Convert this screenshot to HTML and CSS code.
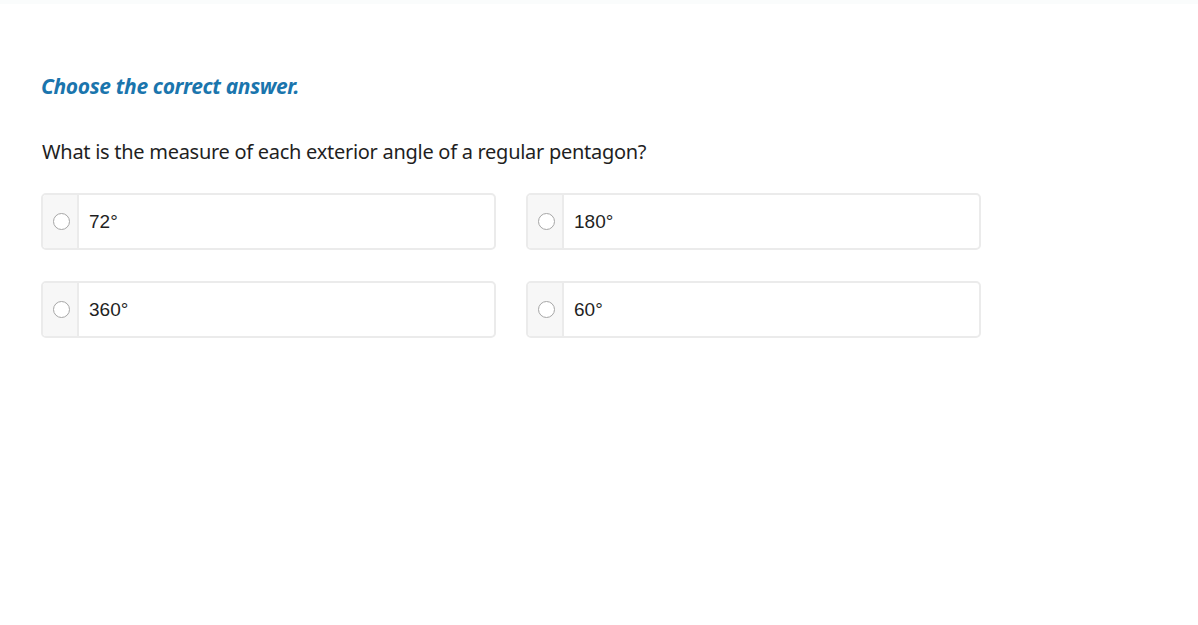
FILE: index.html
```html
<!DOCTYPE html>
<html>
<head>
<meta charset="utf-8">
<link rel="stylesheet" href="styles.css">
</head>
<body>
<div class="topbar"></div>
<main class="quiz">
  <h2 class="instruction">Choose the correct answer.</h2>
  <p class="question">What is the measure of each exterior angle of a regular pentagon?</p>
  <div class="options">
    <label class="option"><span class="radio-cell"><span class="radio"></span></span><span class="label">72°</span></label>
    <label class="option"><span class="radio-cell"><span class="radio"></span></span><span class="label">180°</span></label>
    <label class="option"><span class="radio-cell"><span class="radio"></span></span><span class="label">360°</span></label>
    <label class="option"><span class="radio-cell"><span class="radio"></span></span><span class="label">60°</span></label>
  </div>
</main>
</body>
</html>
```

FILE: styles.css
```css
html, body {
  margin: 0;
  padding: 0;
  background: #ffffff;
}
.topbar {
  height: 4px;
  background: #fafcfc;
}
.quiz {
  padding: 0 41px;
  font-family: "Noto Sans", "Open Sans", sans-serif;
}
.instruction {
  margin: 0;
  padding-top: 70px;
  font-size: 21px;
  line-height: 24px;
  font-weight: 700;
  font-style: italic;
  color: #1a75ad;
  letter-spacing: -0.35px;
}
.question {
  margin: 41px 0 0 1px;
  font-size: 20px;
  line-height: 26px;
  color: #1f1f1f;
  letter-spacing: -0.28px;
}
.options {
  display: grid;
  grid-template-columns: 455px 455px;
  column-gap: 30px;
  row-gap: 31px;
  margin-top: 28px;
}
.option {
  display: flex;
  height: 57px;
  box-sizing: border-box;
  border: 2px solid #ebebeb;
  border-radius: 5px;
  overflow: hidden;
  cursor: pointer;
}
.radio-cell {
  width: 34px;
  flex: none;
  background: #f7f7f7;
  border-right: 2px solid #ebebeb;
  display: flex;
  align-items: center;
  justify-content: center;
}
.radio {
  width: 17px;
  height: 17px;
  box-sizing: border-box;
  border: 1px solid #a6a6a6;
  border-radius: 50%;
  background: #fff;
  margin-left: 2px;
}
.label {
  display: flex;
  align-items: center;
  padding-left: 10px;
  font-family: "Liberation Sans", Arial, sans-serif;
  font-size: 19px;
  color: #1f1f1f;
}
```
